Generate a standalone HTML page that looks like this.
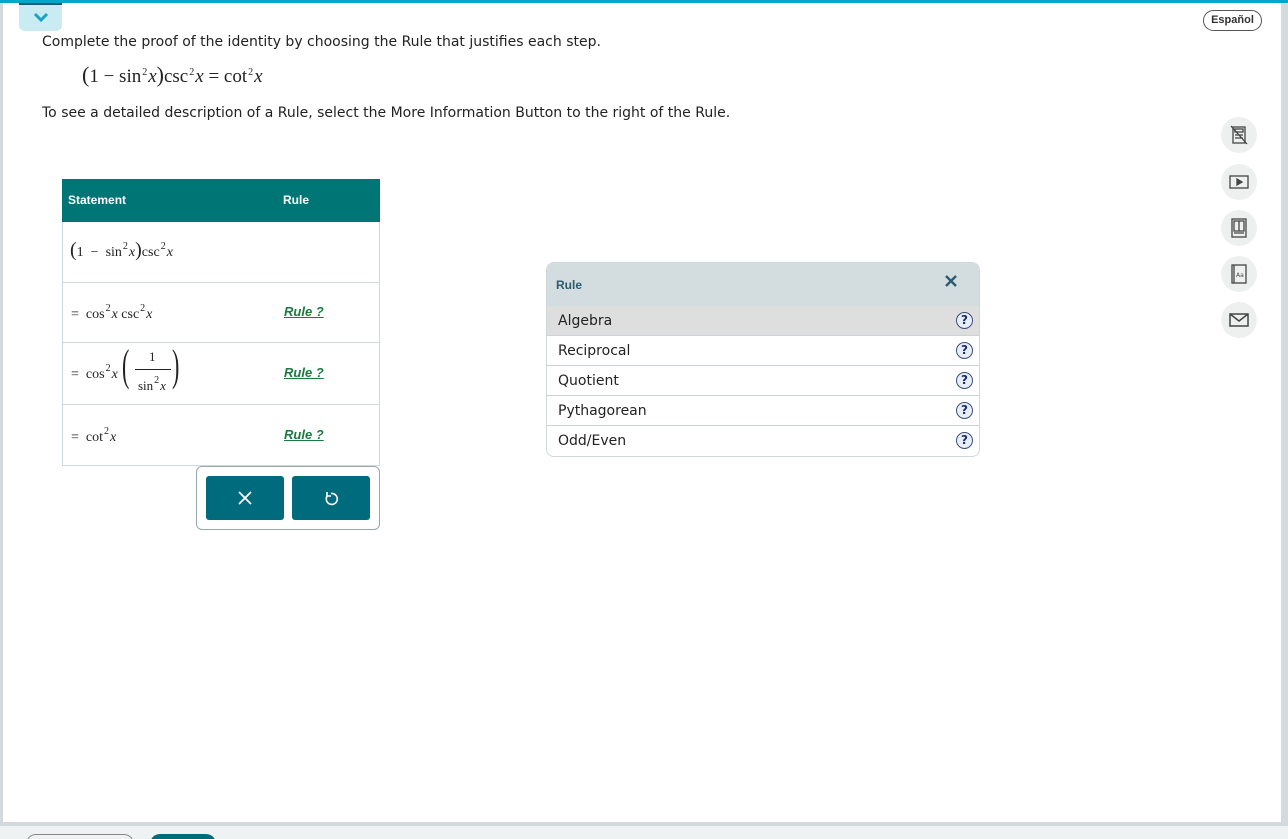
<!DOCTYPE html>
<html style="width:1288px;height:839px;overflow:hidden"><head><meta charset="utf-8"><style>
*{margin:0;padding:0;box-sizing:border-box}
body{width:1288px;height:839px;position:relative;overflow:hidden;background:#fff;font-family:"DejaVu Sans","Liberation Sans",sans-serif;color:#222}
.a{position:absolute}
.m{font-family:"Liberation Serif",serif;color:#222}
.m sup{font-size:10px;vertical-align:7px;margin:0 1px 0 1px}
.i{font-style:italic}
.rl{color:#1b7a3f;font-weight:bold;font-style:italic;text-decoration:underline;font-size:13px;font-family:"Liberation Sans",sans-serif}
.ic{width:36px;height:36px;border-radius:50%;background:#eef0f0;left:1221px}
.row{position:absolute;left:0;width:432px;height:30px;border-top:1px solid #ccd3d7;font-size:14px;padding:7px 0 0 11px;color:#222}
.q{position:absolute;right:6px;top:6px;width:17px;height:17px;border:1.5px solid #3b4f7a;border-radius:50%;font-size:12px;font-weight:bold;text-align:center;line-height:14px;color:#1b2d6b;background:#e8eef8}
</style></head><body>
<div class="a" style="left:0;top:0;width:3px;height:839px;background:#d2dadd"></div>
<div class="a" style="left:1281px;top:0;width:7px;height:839px;background:#d2dadd"></div>
<div class="a" style="left:0;top:0;width:1288px;height:3px;background:#00a8c6"></div>
<div class="a" style="left:19px;top:3px;width:43px;height:28px;background:#c8ecf2;border-radius:0 0 6px 6px;border-top:2px solid #1a5e70"></div>
<svg class="a" style="left:32px;top:11px" width="18" height="12"><path d="M3 3 L9 9 L15 3" stroke="#1aa3c4" stroke-width="3" fill="none"/></svg>
<div class="a" style="left:1203px;top:10px;width:59px;height:21px;border:1px solid #555;border-radius:11px;font-size:11px;font-weight:bold;text-align:center;line-height:19px;color:#333;font-family:'Liberation Sans',sans-serif">Español</div>
<div class="a" style="left:42px;top:34px;font-size:14px">Complete the proof of the identity by choosing the Rule that justifies each step.</div>
<div class="a m" style="left:82px;top:62px;font-size:19px"><span style="font-size:22px">(</span>1 − sin<sup>2</sup><span class="i">x</span><span style="font-size:22px">)</span>csc<sup>2</sup><span class="i">x</span> = cot<sup>2</sup><span class="i">x</span></div>
<div class="a" style="left:42px;top:105px;font-size:14px">To see a detailed description of a Rule, select the More Information Button to the right of the Rule.</div>

<div class="a ic" style="top:117px"></div><div class="a ic" style="top:164px"></div><div class="a ic" style="top:210px"></div><div class="a ic" style="top:256px"></div><div class="a ic" style="top:302px"></div>
<svg class="a" style="left:1228px;top:124px" width="22" height="22" fill="none" stroke="#444" stroke-width="1.3"><rect x="5" y="3" width="12" height="16"/><rect x="7" y="5" width="8" height="3"/><path d="M7 11h8M7 14h8M3 2l16 18"/></svg>
<svg class="a" style="left:1228px;top:171px" width="22" height="22" fill="none" stroke="#444" stroke-width="1.3"><rect x="2" y="5" width="18" height="12"/><path d="M9 8v6l5-3z" fill="#444"/></svg>
<svg class="a" style="left:1228px;top:217px" width="22" height="22" fill="none" stroke="#444" stroke-width="1.3"><rect x="4" y="2" width="14" height="18"/><path d="M6 4h10v10H6zM11 4v10M6 16h10"/></svg>
<svg class="a" style="left:1228px;top:263px" width="22" height="22" fill="none" stroke="#444" stroke-width="1.3"><rect x="4" y="2" width="14" height="18"/><path d="M6 2v18"/><text x="8" y="14" font-size="6" fill="#444" stroke="none">Aa</text></svg>
<svg class="a" style="left:1228px;top:309px" width="22" height="22" fill="none" stroke="#444" stroke-width="1.5"><rect x="2" y="5" width="18" height="12"/><path d="M2 5l9 7 9-7"/></svg>

<div class="a" style="left:62px;top:179px;width:318px;height:287px;border:1px solid #d0d8dc"></div>
<div class="a" style="left:62px;top:179px;width:318px;height:43px;background:#007575;color:#fff;font-size:12px;font-weight:bold;font-family:'Liberation Sans',sans-serif"><span class="a" style="left:6px;top:14px">Statement</span><span class="a" style="left:221px;top:14px">Rule</span></div>
<div class="a" style="left:63px;top:282px;width:316px;height:1px;background:#d0d8dc"></div>
<div class="a" style="left:63px;top:342px;width:316px;height:1px;background:#d0d8dc"></div>
<div class="a" style="left:63px;top:404px;width:316px;height:1px;background:#d0d8dc"></div>
<div class="a m" style="left:70px;top:239px;font-size:14px"><span style="font-size:20px">(</span>1 &nbsp;−&nbsp; sin<sup>2</sup><span class="i">x</span><span style="font-size:20px">)</span>csc<sup>2</sup><span class="i">x</span></div>
<div class="a m" style="left:71px;top:303px;font-size:14px">= &nbsp;cos<sup>2</sup><span class="i">x</span> csc<sup>2</sup><span class="i">x</span></div>
<div class="a m" style="left:71px;top:363px;font-size:14px">= &nbsp;cos<sup>2</sup><span class="i">x</span></div>
<div class="a m" style="left:122px;top:340px;font-size:44px;transform:scaleX(0.5);transform-origin:left">(</div>
<div class="a m" style="left:149px;top:349px;font-size:13px">1</div>
<div class="a" style="left:135px;top:369px;width:36px;height:1px;background:#222"></div>
<div class="a m" style="left:138px;top:375px;font-size:13px">sin<sup>2</sup><span class="i">x</span></div>
<div class="a m" style="left:172px;top:340px;font-size:44px;transform:scaleX(0.5);transform-origin:left">)</div>
<div class="a m" style="left:71px;top:426px;font-size:14px">= &nbsp;cot<sup>2</sup><span class="i">x</span></div>
<div class="a rl" style="left:284px;top:304px">Rule ?</div>
<div class="a rl" style="left:284px;top:365px">Rule ?</div>
<div class="a rl" style="left:284px;top:427px">Rule ?</div>

<div class="a" style="left:196px;top:466px;width:184px;height:64px;border:1px solid #9aa8ae;border-radius:6px;background:#fff"></div>
<div class="a" style="left:206px;top:476px;width:78px;height:44px;background:#006b7d;border-radius:3px"></div>
<div class="a" style="left:292px;top:476px;width:78px;height:44px;background:#006b7d;border-radius:3px"></div>
<svg class="a" style="left:237px;top:490px" width="16" height="16"><path d="M2 2L14 14M14 2L2 14" stroke="#fff" stroke-width="1.8"/></svg>
<svg class="a" style="left:323px;top:490px" width="16" height="16" fill="none" stroke="#fff" stroke-width="1.6"><path d="M4.5 5.5 A5.5 5.5 0 1 0 8 3.5"/><path d="M4 2v4h4"/></svg>

<div class="a" style="left:546px;top:262px;width:434px;height:195px;border:1px solid #d0d8dc;border-radius:8px;background:#fff;overflow:hidden">
<div class="a" style="left:0;top:0;width:434px;height:43px;background:#d3dcdf"><span class="a" style="left:9px;top:15px;font-size:12px;font-weight:bold;color:#2c5c70;font-family:'Liberation Sans',sans-serif">Rule</span>
<svg class="a" style="left:397px;top:11px" width="14" height="14"><path d="M2 2L12 12M12 2L2 12" stroke="#2c5c70" stroke-width="2.4"/></svg></div>
<div class="row" style="top:43px;background:#dedede;border-top:none">Algebra<span class="q">?</span></div>
<div class="row" style="top:72px">Reciprocal<span class="q">?</span></div>
<div class="row" style="top:102px">Quotient<span class="q">?</span></div>
<div class="row" style="top:132px">Pythagorean<span class="q">?</span></div>
<div class="row" style="top:162px;height:32px">Odd/Even<span class="q">?</span></div>
</div>

<div class="a" style="left:0;top:822px;width:1288px;height:17px;background:#eef2f3;border-top:4px solid #d2dadd;overflow:hidden">
<div class="a" style="left:26px;top:8px;width:108px;height:20px;border:1px solid #888;border-radius:12px"></div>
<div class="a" style="left:150px;top:8px;width:66px;height:20px;border-radius:12px;background:#006b7d"></div>
</div>
</body></html>
